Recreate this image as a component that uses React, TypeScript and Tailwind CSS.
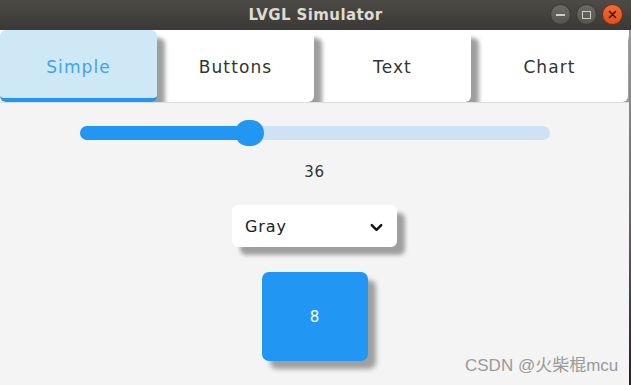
import { ChevronDown } from "lucide-react";

const TABS = ["Simple", "Buttons", "Text", "Chart"];

function TitleBar() {
  return (
    <div className="relative flex h-[30px] items-center justify-center bg-gradient-to-b from-[#4d4b46] to-[#3a3935]">
      <span className="font-['DejaVu_Sans',sans-serif] text-[15px] font-bold tracking-[0.4px] text-[#dfdbd2]">
        LVGL Simulator
      </span>
      <div className="absolute right-[8px] top-[4px] flex items-center gap-[5px]">
        <div className="flex h-[21px] w-[21px] items-center justify-center rounded-full border border-[#3a3935] bg-gradient-to-b from-[#6b6a65] to-[#55544f]">
          <div className="h-[2px] w-[9px] bg-[#cfcdc6]" />
        </div>
        <div className="flex h-[21px] w-[21px] items-center justify-center rounded-full border border-[#3a3935] bg-gradient-to-b from-[#6b6a65] to-[#55544f]">
          <div className="h-[8px] w-[9px] border-[1.5px] border-[#cfcdc6]" />
        </div>
        <div className="flex h-[21px] w-[21px] items-center justify-center rounded-full border border-[#7a2d10] bg-gradient-to-b from-[#f06a35] to-[#e0501c]">
          <svg width="9" height="9" viewBox="0 0 9 9" aria-hidden="true">
            <path d="M1.5 1.5 L7.5 7.5 M7.5 1.5 L1.5 7.5" stroke="#3a1a0c" strokeWidth="1.6" strokeLinecap="round" />
          </svg>
        </div>
      </div>
    </div>
  );
}

function TabBar() {
  return (
    <div className="flex h-[73px] overflow-hidden border-b border-[#dcdcdc] bg-white">
      {TABS.map((t, i) => {
        const active = i === 0;
        const z = ["z-[4]", "z-[3]", "z-[2]", "z-[1]"][i];
        return (
          <div
            key={t}
            className={`relative ${z} flex h-[72px] w-[157px] items-center justify-center rounded-[6px] shadow-[8px_8px_4px_rgba(0,0,0,0.38)] ${
              active
                ? "border-b-[4px] border-[#2196f3] bg-[#cfe8f5] pt-[7px] text-[#3ea2f2]"
                : "bg-white pt-[3px] text-[#333333]"
            }`}
          >
            <span className="text-[17px] tracking-[1.1px]">{t}</span>
          </div>
        );
      })}
    </div>
  );
}

export default function App() {
  const value = 36;
  return (
    <div className="flex h-[385px] w-[631px] flex-col overflow-hidden bg-[#3b3a36] font-['DejaVu_Sans',sans-serif]">
      <TitleBar />
      <div className="flex flex-1">
        <div className="relative flex w-[629px] flex-col">
          <TabBar />
          <div className="flex flex-1 flex-col items-center bg-[#f4f4f4]">
            <div className="relative mt-[17px] flex h-[26px] w-[470px] items-center">
              <div className="h-[14px] w-full rounded-full bg-[#cde2f5]" />
              <div
                className="absolute left-0 top-[6px] h-[14px] rounded-full bg-[#2196f3]"
                style={{ width: `${(value / 100) * 470 + 10}px` }}
              />
              <div className="absolute left-[155px] top-0 h-[26px] w-[29px] rounded-full bg-[#2196f3]" />
            </div>
            <div className="mt-[16px] text-[15px] leading-[20px] tracking-[0.6px] text-[#333333]">{value}</div>
            <div className="mt-[23px] flex h-[42px] w-[165px] items-center justify-between rounded-[6px] bg-white pl-[13px] pr-[11px] pt-[2px] shadow-[8px_8px_4px_rgba(0,0,0,0.35)]">
              <span className="text-[16px] tracking-[0.9px] text-[#222222]">Gray</span>
              <ChevronDown size={19} strokeWidth={3} className="text-[#111111]" />
            </div>
            <div className="mt-[25px] flex h-[89px] w-[106px] items-center justify-center rounded-[7px] bg-[#2196f3] pt-[2px] text-[15px] text-white shadow-[8px_8px_5px_rgba(0,0,0,0.35)]">
              8
            </div>
          </div>
          <div className="absolute left-[465px] top-[325px] font-['Liberation_Sans','Noto_Sans_CJK_SC',sans-serif] text-[17px] leading-[22px] text-[#9a9a9a]">
            CSDN @火柴棍mcu
          </div>
        </div>
        <div className="w-[2px] bg-gradient-to-b from-[#9a9a9a] via-[#6a6a6a] to-[#2a1c28]" />
      </div>
    </div>
  );
}
